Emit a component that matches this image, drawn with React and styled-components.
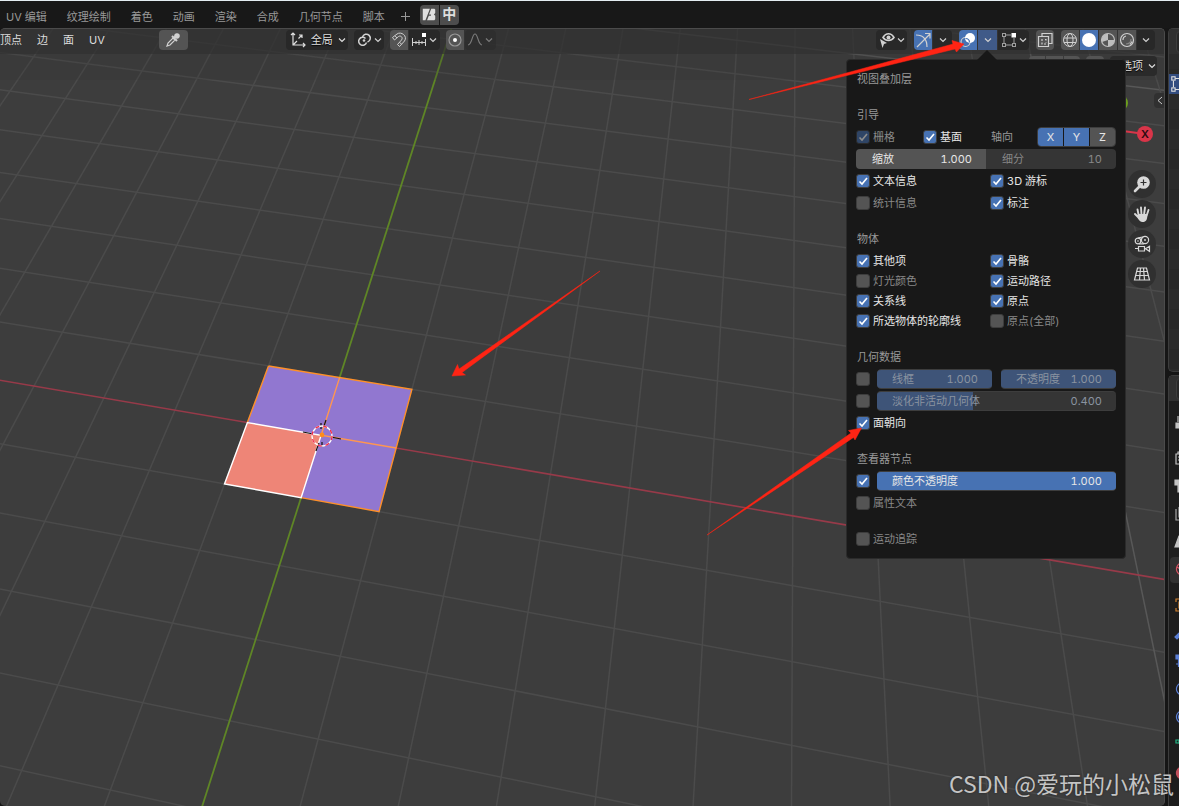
import React, { useState } from 'react';
import styled, { createGlobalStyle } from 'styled-components';

const GlobalStyle = createGlobalStyle`
* {
    box-sizing: border-box;
}
body {
    margin: 0;
    background: #161616;
    color: #dddddd;
    font-family: Inter, "Noto Sans CJK SC", sans-serif;
    font-size: 11px;
    font-variant-numeric: tabular-nums;
    line-height: 20px;
}
button, input, select {
    margin: 0;
    padding: 0;
    border: none;
    background: none;
    color: inherit;
    font: inherit;
}
svg {
    display: block;
    flex: none;
}
`

const Page = styled.div`
position: relative;
display: flex;
flex-direction: column;
min-height: 100vh;
overflow: hidden;
`
const TopBar = styled.nav`
display: flex;
align-items: center;
height: 28px;
border-top: 1px solid #e4edf2;
background: #181818;
`
const Workspace = styled.button`
height: 20px;
margin-top: 4px;
padding: 0 10px;
color: #989898;
&:first-child {
    padding-left: 6px;
}
`
const AddWorkspace = styled(Workspace)`
padding: 0 5px;
`
const LanguageSwitch = styled.div`
display: flex;
gap: 1px;
margin-left: 4px;
border-radius: 4px;
overflow: hidden;
`
const LanguageButton = styled.button`
display: flex;
align-items: center;
justify-content: center;
width: 19px;
height: 20px;
padding-bottom: 2px;
background: #4d4d4d;
color: #dedede;
font-size: 14px;
font-weight: 700;
`
const Main = styled.div`
display: flex;
flex: 1;
gap: 3px;
`
const Viewport = styled.main`
position: relative;
flex: 1;
min-width: 0;
border-radius: 5px;
border-top: 1px solid #4b4b4b;
border-right: 1px solid #4b4b4b;
background: #3d3d3d;
overflow: hidden;
`
const Canvas = styled.svg`
position: absolute;
inset: 0;
width: 100%;
height: 100%;
`
const Header = styled.header`
position: relative;
display: flex;
align-items: center;
height: 25px;
padding-right: 9px;
padding-bottom: 3px;
background: rgba(48, 48, 48, 0.75);
`
const Menus = styled.div`
display: flex;
gap: 15px;
margin-right: 54px;
text-shadow: 0 1px 1px #1c1c1c;
`
const Controls = styled.div`
display: flex;
gap: 6px;
margin-left: 98px;
`
const ViewControls = styled(Controls)`
gap: 7px;
margin-left: auto;
`
const Group = styled.div`
display: flex;
gap: 1px;
border-radius: 4px;
overflow: hidden;
opacity: ${props => (props.$faded ? 0.45 : 1)};
`
const tones = {
    dark: '#282828',
    grey: '#545454',
    blue: '#4772b3',
    dim: '#405a88',
};
const Tool = styled.button`
display: flex;
align-items: center;
justify-content: center;
width: ${props => props.$width || 18}px;
height: 20px;
background: ${props => tones[props.$tone || 'dark']};
color: #d0d0d0;
`
const EyedropperButton = styled(Tool)`
border-radius: 4px;
`
const SelectBox = styled.label`
display: flex;
align-items: center;
gap: 4px;
height: 20px;
padding: 0 1px 0 3px;
border-radius: 4px;
background: #282828;
select {
    width: 22px;
    appearance: none;
    text-shadow: 0 1px 1px #000000;
}
`
const ToolSettings = styled.div`
position: relative;
display: flex;
justify-content: flex-end;
gap: 6px;
height: 26px;
padding: 2px 7px 4px 0;
background: rgba(48, 48, 48, 0.2);
`
const OptionsButton = styled.button`
display: flex;
align-items: center;
justify-content: flex-end;
gap: 4px;
width: 47px;
border-radius: 4px;
background: #2a2a2a;
text-shadow: 0 1px 1px #000000;
`
const CollapseTab = styled.button`
position: absolute;
top: 64px;
right: 0;
width: 10px;
height: 15px;
border-radius: 4px 0 0 4px;
background: #303030;
`
const Navigation = styled.div`
position: absolute;
top: 141px;
right: 8px;
display: flex;
flex-direction: column;
gap: 2px;
`
const NavButton = styled.button`
display: flex;
align-items: center;
justify-content: center;
width: 28px;
height: 28px;
border-radius: 50%;
background: #303030;
color: #d8d8d8;
`
const Popover = styled.section`
position: absolute;
top: 30px;
right: 38px;
display: flex;
flex-direction: column;
gap: 16px;
width: 280px;
padding: 9px;
border: 1px solid #2b2b2b;
border-radius: 4px;
background: #181818;
&::before {
    content: '';
    position: absolute;
    top: -10px;
    left: 130px;
    border: 10px solid transparent;
    border-top: none;
    border-bottom-color: #181818;
}
`
const Title = styled.h2`
margin: 0;
padding-left: 1px;
color: #989898;
font-size: 11px;
font-weight: 400;
`
const Section = styled.div`
display: flex;
flex-direction: column;
gap: 2px;
`
const Columns = styled.div`
display: grid;
grid-template-columns: 1fr 1fr;
column-gap: 8px;
row-gap: ${props => props.$rowGap || 0}px;
`
const AxisRow = styled.div`
display: flex;
justify-content: space-between;
padding-left: 1px;
color: #989898;
`
const AxisButtons = styled.div`
display: flex;
gap: 1px;
border: 1px solid #3d3d3d;
border-radius: 4px;
overflow: hidden;
`
const AxisButton = styled.button`
width: 25px;
line-height: 18px;
background: ${props => (props['aria-pressed'] ? '#4772b3' : '#545454')};
color: #e6e6e6;
`
const CheckLabel = styled.label`
display: flex;
align-items: center;
gap: 3px;
height: 20px;
color: ${props => (props.$on ? '#e6e6e6' : '#888888')};
white-space: nowrap;
input {
    flex: none;
    width: 14px;
    height: 14px;
    appearance: none;
    border: 1px solid #3d3d3d;
    border-radius: 3px;
    background: #545454;
}
input:checked {
    background: #4772b3 url("data:image/svg+xml,%3Csvg xmlns='http://www.w3.org/2000/svg' viewBox='0 0 12 12'%3E%3Cpath d='M2.5 6.5 5 9l5-6' fill='none' stroke='white' stroke-width='1.6'/%3E%3C/svg%3E");
}
input:disabled {
    opacity: 0.5;
}
`
const FieldRow = styled.div`
display: flex;
gap: ${props => (props.$joined ? 0 : 9)}px;
flex: 1;
border-radius: 4px;
overflow: hidden;
`
const CheckRow = styled.div`
display: flex;
gap: 7px;
`
const NumberField = styled.label`
display: flex;
flex: 1;
min-width: 0;
height: 20px;
padding: 0 14px 0 16px;
background: ${props => (props.$off ? '#353535' : '#545454')};
color: ${props => (props.$off ? '#888888' : '#e6e6e6')};
white-space: nowrap;
input {
    flex: 1;
    min-width: 0;
    text-align: right;
    font-variant-numeric: tabular-nums;
}
`
const SliderField = styled.label`
position: relative;
display: flex;
flex: 1;
justify-content: space-between;
height: 20px;
padding: 0 14px 0 15px;
border: 1px solid #3d3d3d;
border-width: 1px 0;
border-radius: 4px;
line-height: 18px;
background: ${props => (props.$off ? '#353535' : '#545454')};
color: ${props => (props.$off ? '#8a93a0' : '#e6e6e6')};
overflow: hidden;
span {
    position: relative;
    pointer-events: none;
}
input {
    position: absolute;
    inset: 0;
    width: 100%;
    height: 100%;
    appearance: none;
}
input::-webkit-slider-thumb {
    appearance: none;
    width: 1px;
}
`
const SliderFill = styled.i`
position: absolute;
inset: 0 auto 0 0;
background: ${props => (props.$off ? '#3e5478' : '#4772b3')};
`
const SideAreas = styled.aside`
display: flex;
flex-direction: column;
gap: 3px;
width: 11px;
overflow: hidden;
`
const Outliner = styled.div`
height: 344px;
border: 1px solid #3d3d3d;
border-width: 1px 0 1px 1px;
border-radius: 5px 0 0 5px;
background: repeating-linear-gradient(#282828 0 20px, #2b2b2b 20px 40px);
overflow: hidden;
`
const AreaHeader = styled.div`
height: 25px;
padding: 2px 0 3px 7px;
background: #303030;
&::before {
    content: '';
    display: block;
    width: 20px;
    height: 20px;
    border: 1px solid #3d3d3d;
    border-radius: 4px;
    background: #282828;
}
`
const ActiveRow = styled.div`
height: 20px;
margin-top: 20px;
background: #334d80;
`
const Properties = styled.div`
flex: 1;
border: 1px solid #3d3d3d;
border-width: 1px 0 0 1px;
border-radius: 5px 0 0 0;
background: #1d1d1d;
overflow: hidden;
`
const TabStrip = styled.div`
display: flex;
flex-direction: column;
padding-top: 8px;
`
const Tab = styled.button`
width: 26px;
height: 26px;
margin: ${props => (props.$apart ? '8px 0 1px 1px' : '1px 0 1px 1px')};
padding-left: 4px;
border-radius: 4px;
background: ${props => (props.$active ? '#303030' : 'transparent')};
color: ${props => props.$color || '#c4c4c4'};
`
const Markup = styled.svg`
position: absolute;
inset: 0;
width: 100%;
height: 100%;
pointer-events: none;
`
const Watermark = styled.div`
position: absolute;
right: 5px;
bottom: 6px;
color: rgba(225, 225, 225, 0.85);
font-family: "Noto Sans CJK SC", sans-serif;
font-size: 23px;
line-height: 34px;
white-space: nowrap;
text-shadow: 0 0 2px #222222;
`

const Icon = ({ size = 18, width = 1.2, children }) => (
    <svg width={size} height={size} viewBox="0 0 18 18" fill="none" stroke="currentColor" strokeWidth={width} aria-hidden="true">
        {children}
    </svg>
);

const Chevron = () => (
    <svg width="10" height="18" viewBox="0 0 10 18" fill="none" stroke="currentColor" strokeWidth="1.2" aria-hidden="true">
        <path d="M2 7.5 5 10.5 8 7.5" />
    </svg>
);

// Ground plane to view: each grid unit goes through the camera's perspective
const project = (x, y) => {
    const w = 1 - 0.009 * x + 0.0401 * y;
    return [
        (321.1 + 71.49 * x + 32.08 * y) / w,
        (435.2 + 8.81 * x - 42.47 * y) / w,
    ];
};

const path = points => 'M' + points.map(([x, y]) => project(x, y).map(n => n.toFixed(1)).join(' ')).join('L');

const steps = Array.from({ length: 33 }, (_, i) => i - 16);

function Grid() {
    return (
        <g fill="none" strokeWidth="1.5">
            {steps.filter(n => n !== 0).map(n => (
                <g key={n} stroke={n % 10 === 0 ? '#585858' : '#4b4b4b'}>
                    <path d={path([[n, -9], [n, 14]])} />
                    {n > -9 && <path d={path([[-16, n], [17, n]])} />}
                </g>
            ))}
            <path d={path([[-16, 0], [17, 0]])} stroke="#973a49" strokeWidth="1.6" />
            <path d={path([[0, -9], [0, 14]])} stroke="#5f8626" strokeWidth="1.8" />
        </g>
    );
}

function Mesh() {
    return (
        <g fill="none" strokeWidth="1.4">
            <path d={path([[-1, 1], [1, 1], [1, -1], [-1, -1]]) + 'Z'} fill="#9177d0" />
            <path d={path([[-1, 1], [1, 1], [1, -1], [0, -1]])} stroke="#ff9028" />
            <path d={path([[-1, 0], [-1, 1]])} stroke="#ff9028" />
            <path d={path([[0, 1], [0, 0], [1, 0]])} stroke="#ff9650" />
            <path d={path([[-1, 0], [0, 0], [0, -1], [-1, -1]]) + 'Z'} fill="#ee8577" stroke="#ffffff" />
        </g>
    );
}

function Cursor3D() {
    return (
        <g fill="none">
            <path d="M303 432l10 2M331 437l10 2M326 420l-2 6M319 443l-3 8M321 423v6M322 442v5" stroke="#111111" strokeWidth="1.2" />
            <circle cx="322" cy="436" r="10" stroke="#ffffff" strokeWidth="1.3" />
            <circle cx="322" cy="436" r="10" stroke="#f02a4a" strokeWidth="1.3" strokeDasharray="4 4" />
            <circle cx="322" cy="435" r="2.4" fill="#ff8c1a" />
        </g>
    );
}

function Check({ label, on, off }) {
    const [checked, setChecked] = useState(Boolean(on));
    return (
        <CheckLabel $on={checked && !off}>
            <input
                type="checkbox"
                checked={checked}
                disabled={off}
                aria-label={label ? undefined : '启用'}
                onChange={event => setChecked(event.target.checked)}
            />
            {label}
        </CheckLabel>
    );
}

function Slider({ label, start, off }) {
    const [value, setValue] = useState(start);
    return (
        <SliderField $off={off}>
            <SliderFill $off={off} style={{ width: value * 100 + '%' }} />
            <input
                type="range"
                min="0"
                max="1"
                step="0.001"
                value={value}
                disabled={off}
                onChange={event => setValue(Number(event.target.value))}
            />
            <span>{label}</span>
            <span>{value.toFixed(3)}</span>
        </SliderField>
    );
}

function OverlayPopover() {
    const [axes, setAxes] = useState({ X: true, Y: true, Z: false });

    return (
        <Popover>
            <Title>视图叠加层</Title>
            <Section>
                <Title>引导</Title>
                <Columns>
                    <Columns>
                        <Check label="栅格" on off />
                        <Check label="基面" on />
                    </Columns>
                    <AxisRow>
                        轴向
                        <AxisButtons>
                            {Object.keys(axes).map(axis => (
                                <AxisButton
                                    key={axis}
                                    aria-pressed={axes[axis]}
                                    onClick={() => setAxes({ ...axes, [axis]: !axes[axis] })}
                                >
                                    {axis}
                                </AxisButton>
                            ))}
                        </AxisButtons>
                    </AxisRow>
                </Columns>
                <FieldRow $joined>
                    <NumberField>缩放<input type="text" defaultValue="1.000" /></NumberField>
                    <NumberField $off>细分<input type="text" defaultValue="10" disabled /></NumberField>
                </FieldRow>
                <Columns $rowGap={2}>
                    <Check label="文本信息" on />
                    <Check label="3D 游标" on />
                    <Check label="统计信息" />
                    <Check label="标注" on />
                </Columns>
            </Section>
            <Section>
                <Title>物体</Title>
                <Columns>
                    <Check label="其他项" on />
                    <Check label="骨骼" on />
                    <Check label="灯光颜色" />
                    <Check label="运动路径" on />
                    <Check label="关系线" on />
                    <Check label="原点" on />
                    <Check label="所选物体的轮廓线" on />
                    <Check label="原点(全部)" />
                </Columns>
            </Section>
            <Section>
                <Title>几何数据</Title>
                <CheckRow>
                    <Check />
                    <FieldRow>
                        <Slider label="线框" start={1} off />
                        <Slider label="不透明度" start={1} off />
                    </FieldRow>
                </CheckRow>
                <CheckRow>
                    <Check />
                    <Slider label="淡化非活动几何体" start={0.4} off />
                </CheckRow>
                <Check label="面朝向" on />
            </Section>
            <Section>
                <Title>查看器节点</Title>
                <CheckRow>
                    <Check on />
                    <Slider label="颜色不透明度" start={1} />
                </CheckRow>
                <Check label="属性文本" />
            </Section>
            <Check label="运动追踪" />
        </Popover>
    );
}

function ViewHeader() {
    return (
        <Header>
            <Menus>
                <button>顶点</button>
                <button>边</button>
                <button>面</button>
                <button>UV</button>
            </Menus>
            <EyedropperButton $tone="grey" $width={29} aria-label="吸管">
                <Icon>
                    <path d="M3 15l1-3 5-5 2 2-5 5z" />
                    <path d="M8 5l5 5M10 7l3-3" strokeWidth="2" />
                    <circle cx="13" cy="5" r="2.2" fill="currentColor" />
                </Icon>
            </EyedropperButton>
            <Controls>
                <SelectBox>
                    <Icon>
                        <path d="M4 2v12h12M4 14l4-4M2 4l2-2 2 2M14 12l2 2-2 2M10 4h3v3M9.500 7.500 13 4" />
                    </Icon>
                    <select aria-label="变换坐标系">
                        <option>全局</option>
                    </select>
                    <Chevron />
                </SelectBox>
                <Group>
                    <Tool $width={30} aria-label="轴心点">
                        <Icon>
                            <path d="M7.500 6a4 4 0 1 1 5 5M10.500 7.500a4 4 0 1 0 1 4" strokeWidth="1.5" />
                            <circle cx="9" cy="9.500" r="1.300" fill="currentColor" stroke="none" />
                        </Icon>
                        <Chevron />
                    </Tool>
                </Group>
                <Group>
                    <Tool $tone="grey" aria-label="吸附">
                        <Icon>
                            <path d="M2.500 6.500 7 3c4-3 11 2 7.500 7L9.500 15.500l-2-2L11.500 9c2-2.500-1-5-3-3.500L4.500 9zM5 4.800l2 2.200M11.500 13.200l-2-2" strokeWidth="1" />
                        </Icon>
                    </Tool>
                    <Tool $width={31} aria-label="吸附至">
                        <Icon>
                            <path d="M2.500 7v8M6 10v3M9 9v5M12 10v3M15.500 8v7M2.500 11.500h13" strokeWidth="1" />
                            <rect x="12" y="2" width="4" height="4" fill="#ffffff" stroke="none" />
                        </Icon>
                        <Chevron />
                    </Tool>
                </Group>
                <Group>
                    <Tool $tone="grey" aria-label="衰减编辑">
                        <Icon>
                            <circle cx="9" cy="9" r="6" stroke="#999999" />
                            <circle cx="9" cy="9" r="2" fill="#ffffff" stroke="none" />
                        </Icon>
                    </Tool>
                    <Group $faded>
                        <Tool $width={31} aria-label="衰减曲线">
                            <Icon>
                                <path d="M2 14c4 0 4-11 7-11s3 11 7 11" />
                            </Icon>
                            <Chevron />
                        </Tool>
                    </Group>
                </Group>
            </Controls>
            <ViewControls>
                <Group>
                    <Tool $width={31} aria-label="可见性">
                        <Icon>
                            <path d="M5 6.500c3-5 8-5 11 0-3 4-8 4-11 0z" strokeWidth="1.6" />
                            <circle cx="10.500" cy="6.500" r="2" fill="currentColor" stroke="none" />
                            <path d="M2 8l7 4-3 1-1.500 4z" fill="currentColor" stroke="none" />
                        </Icon>
                        <Chevron />
                    </Tool>
                </Group>
                <Group>
                    <Tool $tone="blue" aria-label="显示操控件">
                        <Icon>
                            <path d="M2 4c7 0 11 4 11 12M3 16 16 3M11 2.500h5v5" />
                        </Icon>
                    </Tool>
                    <Tool $width={19} aria-label="操控件设置"><Chevron /></Tool>
                </Group>
                <Group>
                    <Tool $tone="blue" aria-label="显示叠加层">
                        <Icon>
                            <circle cx="6.500" cy="11" r="4.500" />
                            <circle cx="11" cy="7" r="5" fill="#ffffff" stroke="none" />
                            <path d="M6.500 7.500c3 0 4 2 4 4" stroke="#4772b3" />
                        </Icon>
                    </Tool>
                    <Tool $tone="dim" $width={19} aria-label="叠加层设置"><Chevron /></Tool>
                    <Tool $width={31} aria-label="网格编辑模式">
                        <Icon width={1}>
                            <g opacity="0.7">
                                <path d="M5.500 4H11M4 5.500v7M5.500 14h7M14 7v5.500" />
                                <rect x="2.500" y="2.500" width="3" height="3" />
                                <rect x="2.500" y="12.500" width="3" height="3" />
                                <rect x="12.500" y="12.500" width="3" height="3" />
                            </g>
                            <rect x="11.500" y="2" width="4.500" height="4.500" fill="#ffffff" stroke="none" />
                        </Icon>
                        <Chevron />
                    </Tool>
                </Group>
                <Group>
                    <Tool $tone="grey" aria-label="透视模式">
                        <Icon>
                            <path d="M6 5V2.500h10v10h-3M2.500 5.500h10v10h-10z" />
                            <path d="M6 8v5h4M9 8.500h1v3" strokeDasharray="2 1.500" />
                        </Icon>
                    </Tool>
                </Group>
                <Group>
                    <Tool $tone="grey" aria-label="线框">
                        <Icon width={1}>
                            <circle cx="9" cy="9" r="6.500" />
                            <ellipse cx="9" cy="9" rx="3" ry="6.500" />
                            <path d="M3 7h12M3 11.500h12" />
                        </Icon>
                    </Tool>
                    <Tool $tone="blue" aria-label="实体">
                        <Icon><circle cx="9" cy="9" r="7" fill="#ffffff" stroke="none" /></Icon>
                    </Tool>
                    <Tool $tone="grey" aria-label="材质预览">
                        <Icon>
                            <g opacity="0.85">
                                <circle cx="9" cy="9" r="6.500" />
                                <path d="M9 9V2.500A6.500 6.500 0 0 0 3 11zM9 9h6.500A6.500 6.500 0 0 1 9 15.500z" fill="currentColor" stroke="none" />
                            </g>
                        </Icon>
                    </Tool>
                    <Tool $tone="grey" aria-label="渲染">
                        <Icon>
                            <circle cx="9" cy="9" r="6.500" />
                            <path d="M5 9a4 4 0 0 1 3-4M12 13.500l2-3" />
                            <path d="M8 13c3 0 5-2 5-5" stroke="#888888" />
                        </Icon>
                    </Tool>
                    <Tool aria-label="着色设置"><Chevron /></Tool>
                </Group>
            </ViewControls>
        </Header>
    );
}

function NavGizmos() {
    return (
        <Navigation>
            <NavButton aria-label="缩放视图">
                <Icon>
                    <circle cx="10.500" cy="7.500" r="6.300" fill="currentColor" stroke="none" />
                    <path d="M6.500 11.500 2 16" strokeWidth="2.6" strokeLinecap="round" />
                    <path d="M10.500 4.500v6M7.500 7.500h6" stroke="#303030" />
                </Icon>
            </NavButton>
            <NavButton aria-label="移动视图">
                <Icon>
                    <path d="M6 12 4.500 4.500M8.500 10 8 2.500M11 10l1-7.500M13.500 11l2-6M6 13 2 9" strokeWidth="1.9" strokeLinecap="round" />
                    <path d="M5.200 9h9v3c0 3-2 5-4.500 5s-4-2-5-4z" fill="currentColor" stroke="none" />
                </Icon>
            </NavButton>
            <NavButton aria-label="摄像机视图">
                <Icon>
                    <circle cx="5" cy="6" r="2.800" />
                    <circle cx="12" cy="5" r="3.600" />
                    <path d="M5 3.200C7 2.500 8 2 10 2M6 8.800h5M5.500 11.500h6v4.500h-6zM12.500 13.800l4-2.500v5zM2 13.500h3" />
                    <circle cx="12" cy="5" r="0.900" fill="currentColor" stroke="none" />
                    <circle cx="5" cy="6" r="0.800" fill="currentColor" stroke="none" />
                </Icon>
            </NavButton>
            <NavButton aria-label="切换透视">
                <Icon>
                    <path d="M4.500 3h9l3 12h-15zM7.500 3 6.500 15M10.500 3l1 12M3.800 6.500h10.400M2.800 10.500h12.400" />
                </Icon>
            </NavButton>
        </Navigation>
    );
}

const workspaces = ['UV 编辑', '纹理绘制', '着色', '动画', '渲染', '合成', '几何节点', '脚本'];

const tabs = [
    { name: '工具', color: '#c4c4c4', d: 'M4 2v6M2 9h7v5H2z', fill: true },
    { name: '渲染', color: '#c4c4c4', d: 'M2 5h12v10H2zM4 5V3h6v2M4 8h4M4 11h4', apart: true },
    { name: '输出', color: '#c4c4c4', d: 'M1 3h14v5H1zM4 8v7h9V8', fill: true },
    { name: '视图层', color: '#a8a8a8', d: 'M2 4v11h10M5 2v10h10' },
    { name: '场景', color: '#c4c4c4', d: 'M5 3 1 14h10L7 3z', fill: true },
    { name: '世界', color: '#d65464', d: 'M8 2a6 6 0 1 0 1 0M3 6l5 3-2 5', active: true },
    { name: '物体', color: '#d0802e', d: 'M5 3H2v3M2 12v3h3M5 6h7v6H5z', apart: true },
    { name: '修改器', color: '#5b7fd6', d: 'M1 13l6-6c0-4 4-5 6-4l-2 4-8 8z', fill: true },
    { name: '粒子', color: '#5b7fd6', d: 'M2 3h3v4H2zM4.500 7v8M2 12h10', fill: true },
    { name: '物理', color: '#5b7fd6', d: 'M8 3a6 6 0 1 0 1 0' },
    { name: '约束', color: '#5b7fd6', d: 'M8 3a6 6 0 1 0 1 0M7 6a3 3 0 1 0 1 0' },
    { name: '数据', color: '#22b886', d: 'M2 4h3v3H2zM5 7l4 7M9 4h5' },
    { name: '材质', color: '#c04f5b', d: 'M8 3a6 6 0 1 0 1 0', fill: true },
];

export default function App() {
    return (
        <Page>
            <GlobalStyle />
            <TopBar>
                {workspaces.map(name => <Workspace key={name}>{name}</Workspace>)}
                <AddWorkspace aria-label="添加工作区">
                    <svg width="11" height="20" viewBox="0 0 11 20" stroke="currentColor" aria-hidden="true">
                        <path d="M1 9.500h9M5.500 5v9" />
                    </svg>
                </AddWorkspace>
                <LanguageSwitch>
                    <LanguageButton aria-label="双语">
                        <Icon size={16}>
                            <path d="M2 3h8L5 16H2zM11.500 3H15l1 1v4l-1.500 1.500L16 11v4l-1 1H6.800l2-5h2.400v-1.500H9z" fill="currentColor" stroke="none" />
                        </Icon>
                    </LanguageButton>
                    <LanguageButton>中</LanguageButton>
                </LanguageSwitch>
            </TopBar>
            <Main>
                <Viewport>
                    <Canvas viewBox="0 29 1164 777" preserveAspectRatio="xMinYMin slice">
                        <Grid />
                        <Mesh />
                        <Cursor3D />
                    </Canvas>
                    <ViewHeader />
                    <ToolSettings>
                        <Group>
                            <Tool $tone="grey" $width={16} aria-label="X 镜像" />
                            <Tool $tone="grey" $width={17} aria-label="Y 镜像" />
                            <Tool $tone="grey" $width={16} aria-label="Z 镜像" />
                        </Group>
                        <Group>
                            <Tool $tone="grey" aria-label="自动合并" />
                        </Group>
                        <OptionsButton>选项<Chevron /></OptionsButton>
                    </ToolSettings>
                    <Canvas viewBox="0 29 1164 777" preserveAspectRatio="xMaxYMin slice" pointerEvents="none">
                        <path d="M1108 129l37 5" stroke="#d93549" strokeWidth="2" />
                        <circle cx="1145" cy="134" r="8" fill="#d93549" />
                        <circle cx="1120" cy="103" r="8" fill="#6c9f1d" />
                        <text x="1145" y="138" textAnchor="middle" fontSize="11" fontWeight="600" fill="#2a0b10">X</text>
                    </Canvas>
                    <CollapseTab aria-label="展开侧栏">
                        <svg width="10" height="15" viewBox="0 0 10 15" fill="none" stroke="#c8c8c8" aria-hidden="true">
                            <path d="M8 4 4 7.500 8 11" />
                        </svg>
                    </CollapseTab>
                    <NavGizmos />
                    <OverlayPopover />
                </Viewport>
                <SideAreas>
                    <Outliner>
                        <AreaHeader />
                        <ActiveRow>
                            <Icon size={20} width={1}>
                                <path d="M4 6v6M5.500 4h7M5.500 14h7M14 6v6" />
                                <rect x="2.500" y="2.500" width="3" height="3" />
                                <rect x="2.500" y="12.500" width="3" height="3" />
                            </Icon>
                        </ActiveRow>
                    </Outliner>
                    <Properties>
                        <AreaHeader />
                        <TabStrip>
                            {tabs.map(tab => (
                                <Tab key={tab.name} aria-label={tab.name} $color={tab.color} $apart={tab.apart} $active={tab.active}>
                                    <Icon>
                                        <path d={tab.d} fill={tab.fill ? 'currentColor' : 'none'} />
                                    </Icon>
                                </Tab>
                            ))}
                        </TabStrip>
                    </Properties>
                </SideAreas>
            </Main>
            <Markup
                viewBox="0 0 1179 806"
                preserveAspectRatio="xMaxYMin slice"
                fill="#ff2414"
                stroke="#ff2414"
                strokeWidth="0.5"
                aria-hidden="true"
            >
                <path d="M749 99.500 953 44 952 40.500 964 44 956.500 52 955 49z" />
                <path d="M600 271 459 369 457.500 364.500 452 376 465.500 375 462 372.500z" />
                <path d="M707 535 851 433 848.500 430.500 861.500 428 855 440 853.500 437.500z" />
            </Markup>
            <Watermark>CSDN @爱玩的小松鼠</Watermark>
        </Page>
    );
}
